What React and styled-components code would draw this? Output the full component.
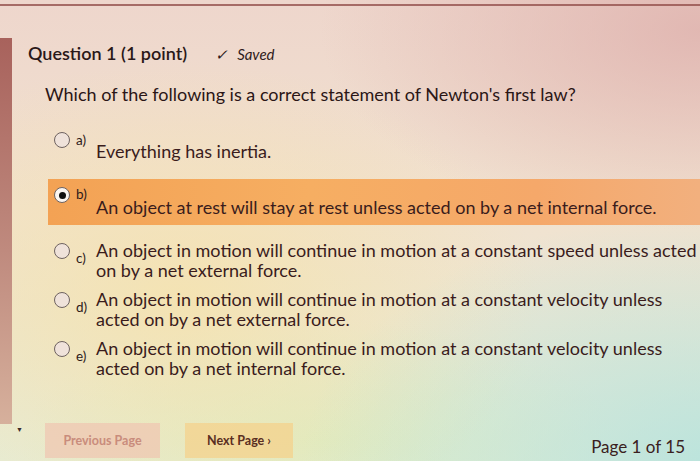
import React from 'react';
import styled, { createGlobalStyle } from 'styled-components';

const Global = createGlobalStyle`
  html, body { margin: 0; padding: 0; }
  body { font-family: Lato, "Open Sans", sans-serif; }
`;

const Screen = styled.div`
  width: 700px;
  height: 461px;
  overflow: hidden;
  display: flex;
  flex-direction: column;
  color: #2e1a1a;
  background:
    radial-gradient(ellipse 420px 260px at 720px 470px, rgba(178, 226, 222, 0.85), rgba(178, 226, 222, 0) 100%),
    radial-gradient(ellipse 380px 200px at 700px 30px, rgba(222, 176, 172, 0.8), rgba(222, 176, 172, 0) 100%),
    radial-gradient(ellipse 360px 240px at 180px 300px, rgba(246, 226, 168, 0.75), rgba(246, 226, 168, 0) 100%),
    radial-gradient(ellipse 300px 120px at 320px 440px, rgba(220, 236, 190, 0.8), rgba(220, 236, 190, 0) 100%),
    linear-gradient(180deg, #eed6cc 0%, #f1e2d0 45%, #e6ecd6 100%);
`;

const TopRule = styled.div`
  height: 2px;
  margin-top: 4px;
  background: #93504c;
  opacity: 0.8;
`;

const Body = styled.div`
  flex: 1;
  display: flex;
`;

const Side = styled.div`
  width: 12px;
  display: flex;
  flex-direction: column;
  padding: 32px 0 28px;
`;

const Strip = styled.div`
  flex: 1;
  background: linear-gradient(180deg, #a8625c 0%, #bf8a7e 55%, #d6b09c 100%);
`;

const Marker = styled.span`
  margin: 2px 0 0 16px;
  font-size: 7px;
  color: #3a2a2a;
  line-height: 1;
`;

const Main = styled.div`
  flex: 1;
  padding: 36px 0 3px 16px;
  display: flex;
  flex-direction: column;
`;

const Header = styled.div`
  display: flex;
  align-items: baseline;
  gap: 28px;
  height: 22px;
  line-height: 22px;
`;

const Title = styled.span`
  font-size: 18px;
  font-weight: 600;
  color: #2a1818;
`;

const Saved = styled.span`
  font-size: 15px;
  font-style: italic;
  color: #2e1a1a;
  display: flex;
  gap: 9px;
`;

const Prompt = styled.div`
  margin: 19px 0 19px 17px;
  font-size: 18px;
  line-height: 22px;
  color: #2b1616;
`;

const Options = styled.div`
  margin-left: 20px;
  display: flex;
  flex-direction: column;
`;

const Row = styled.div`
  display: flex;
  align-items: flex-start;
  padding: ${p => (p.$multi ? '8px 0 4px 6px' : '8px 0 8px 6px')};
  margin-bottom: ${p => (p.$multi ? 0 : 10)}px;
  background: ${p =>
    p.$picked
      ? 'linear-gradient(90deg, #f3a254 0%, #f6ae62 40%, #f5a86a 75%, #f2b07e 100%)'
      : 'transparent'};
`;

const Radio = styled.span`
  flex: none;
  width: 14px;
  height: 14px;
  border-radius: 50%;
  border: 1.5px solid #6e6260;
  background: ${p => (p.$on ? '#fbf6f2' : '#efe2da')};
  display: flex;
  align-items: center;
  justify-content: center;

  &::after {
    content: '';
    width: 7px;
    height: 7px;
    border-radius: 50%;
    background: #111;
    display: ${p => (p.$on ? 'block' : 'none')};
  }
`;

const Letter = styled.span`
  flex: none;
  width: 20px;
  margin: ${p => p.$drop}px 0 0 6px;
  font-size: 13.5px;
  line-height: 14px;
  color: #2e1a1a;
`;

const Answer = styled.span`
  margin-top: ${p => p.$drop}px;
  font-size: 18px;
  line-height: 20px;
  color: #3a1c1c;
  max-width: 606px;
`;

const Footer = styled.div`
  margin-top: auto;
  display: flex;
  align-items: flex-end;
  padding-left: 17px;
`;

const PageButton = styled.div`
  width: ${p => p.$w}px;
  height: 35px;
  margin-right: 25px;
  display: flex;
  align-items: center;
  justify-content: center;
  font-size: 12.5px;
  font-weight: 700;
  color: ${p => (p.$off ? '#c98c7c' : '#5a2e22')};
  background: ${p => (p.$off ? 'rgba(240, 196, 176, 0.7)' : 'rgba(244, 210, 140, 0.75)')};
`;

const PageCount = styled.span`
  margin-left: auto;
  margin-right: 15px;
  font-size: 17px;
  line-height: 22px;
  color: #3a2020;
`;

const options = [
  { key: 'a', text: 'Everything has inertia.', textDrop: 9, labelDrop: 1 },
  { key: 'b', text: 'An object at rest will stay at rest unless acted on by a net internal force.', textDrop: 10, labelDrop: 0, picked: true },
  { key: 'c', text: 'An object in motion will continue in motion at a constant speed unless acted on by a net external force.', textDrop: -3, labelDrop: 8, multi: true },
  { key: 'd', text: 'An object in motion will continue in motion at a constant velocity unless acted on by a net external force.', textDrop: -3, labelDrop: 8, multi: true },
  { key: 'e', text: 'An object in motion will continue in motion at a constant velocity unless acted on by a net internal force.', textDrop: -3, labelDrop: 8, multi: true },
];

const App = () => {
  return (
    <Screen>
      <Global />
      <TopRule />
      <Body>
        <Side>
          <Strip />
          <Marker>▼</Marker>
        </Side>
        <Main>
          <Header>
            <Title>Question 1 (1 point)</Title>
            <Saved><span>✓</span>Saved</Saved>
          </Header>
          <Prompt>Which of the following is a correct statement of Newton's first law?</Prompt>
          <Options>
            {options.map(o => (
              <Row key={o.key} $picked={o.picked} $multi={o.multi}>
                <Radio $on={o.picked} />
                <Letter $drop={o.labelDrop}>{o.key})</Letter>
                <Answer $drop={o.textDrop}>{o.text}</Answer>
              </Row>
            ))}
          </Options>
          <Footer>
            <PageButton $w={115} $off>Previous Page</PageButton>
            <PageButton $w={108}>Next Page ›</PageButton>
            <PageCount>Page 1 of 15</PageCount>
          </Footer>
        </Main>
      </Body>
    </Screen>
  );
};

export default App;
